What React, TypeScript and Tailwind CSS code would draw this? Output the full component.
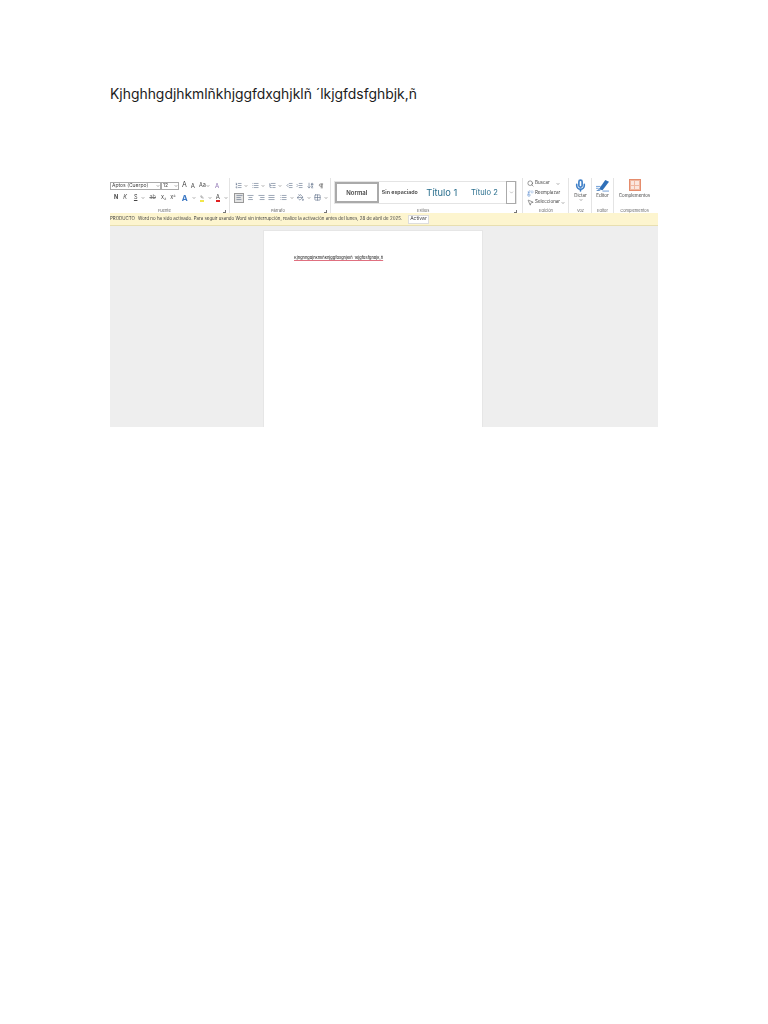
import {
  AlignCenter,
  AlignJustify,
  AlignLeft,
  AlignRight,
  ArrowDownAZ,
  ChevronDown,
  Grid2x2,
  Indent,
  List,
  ListOrdered,
  ListTree,
  Mic,
  MousePointer2,
  Outdent,
  PaintBucket,
  Pilcrow,
  Replace,
  Search,
} from "lucide-react";

const icon = "w-[7px] h-[7px] text-[#5a6a85]";

function Caret() {
  return <ChevronDown className="w-[4px] h-[4px] text-[#555]" strokeWidth={3} />;
}

function GroupLabel({ children }: { children: string }) {
  return <div className="text-[4px] leading-[5px] text-[#666] text-center">{children}</div>;
}

export default function App() {
  return (
    <div className="min-h-[1024px] bg-white pt-[85px] font-['Inter',sans-serif]">
      <p className="ml-[110px] text-[13.9px] leading-[18px] text-[#1c1c1c]">
        Kjhghhgdjhkmlñkhjggfdxghjklñ ´lkjgfdsfghbjk,ñ
      </p>

      {/* pasted screenshot of the word ribbon */}
      <div className="mt-[75px] ml-[110px] w-[548px] blur-[0.35px]">
        <div className="h-[35px] flex bg-white">
          {/* Fuente */}
          <div className="w-[120px] flex flex-col pt-[3px] border-r border-[#e4e4e4]">
            <div className="flex items-center h-[9px]">
              <div className="w-[51px] h-[8px] border border-[#aaa] flex items-center justify-between pl-[1px] text-[5px] text-[#444]">
                Aptos (Cuerpo)
                <Caret />
              </div>
              <div className="w-[18px] h-[8px] border border-[#aaa] flex items-center justify-between pl-[1px] text-[5px] text-[#444]">
                12
                <Caret />
              </div>
              <span className="text-[7px] text-[#444] ml-[3px]">A</span>
              <span className="text-[6px] text-[#444] ml-[4px]">A</span>
              <span className="text-[5.5px] text-[#444] ml-[4px]">Aa</span>
              <Caret />
              <span className="text-[6px] text-[#8a6fb0] ml-[5px]">A</span>
            </div>
            <div className="flex items-center gap-[4px] h-[11px] mt-[2px] pl-[4px] text-[5.5px] text-[#444]">
              <b>N</b>
              <i className="ml-[1px]">K</i>
              <span className="underline ml-[3px]">S</span>
              <Caret />
              <span className="line-through text-[#777]">ab</span>
              <span className="ml-[1px]">x₂</span>
              <span>x²</span>
              <span className="text-[8px] font-bold text-[#3b78c4] leading-none ml-[2px]">A</span>
              <Caret />
              <span className="border-b-2 border-[#f2e64a] text-[5px] leading-[6px] text-[#777]">✎</span>
              <Caret />
              <span className="border-b-2 border-[#e02020] text-[6px] leading-[6px]">A</span>
              <Caret />
            </div>
            <div className="mt-auto flex justify-between items-end pr-[3px] pl-[48px] pb-[0px]">
              <GroupLabel>Fuente</GroupLabel>
              <span className="w-[3px] h-[3px] border-r border-b border-[#777]" />
            </div>
          </div>

          {/* Parrafo */}
          <div className="ml-[3px] w-[98px] flex flex-col pt-[3px] border-r border-[#e4e4e4]">
            <div className="flex items-center gap-[2px] h-[9px] pl-[2px]">
              <ListOrdered className={icon} />
              <Caret />
              <List className={`${icon} ml-[2px]`} />
              <Caret />
              <ListTree className={`${icon} ml-[2px]`} />
              <Caret />
              <Outdent className={`${icon} ml-[2px]`} />
              <Indent className={`${icon} ml-[1px]`} />
              <ArrowDownAZ className={`${icon} ml-[2px]`} />
              <Pilcrow className="w-[6px] h-[6px] text-[#444] ml-[2px]" />
            </div>
            <div className="flex items-center gap-[3px] h-[11px] mt-[2px] pl-[1px]">
              <span className="w-[10px] h-[10px] bg-[#e4e4e4] border border-[#999] flex items-center justify-center">
                <AlignLeft className={icon} />
              </span>
              <AlignCenter className={icon} />
              <AlignRight className={`${icon} ml-[1px]`} />
              <AlignJustify className={icon} />
              <List className={`${icon} ml-[2px]`} />
              <Caret />
              <PaintBucket className={icon} />
              <Caret />
              <Grid2x2 className={icon} />
              <Caret />
            </div>
            <div className="mt-auto flex justify-between items-end pr-[3px] pl-[38px]">
              <GroupLabel>Párrafo</GroupLabel>
              <span className="w-[3px] h-[3px] border-r border-b border-[#777]" />
            </div>
          </div>

          {/* Estilos */}
          <div className="ml-[3px] w-[189px] flex flex-col pt-[3px] pr-[5px] border-r border-[#e4e4e4]">
            <div className="h-[23px] flex items-center border border-[#e4e4e4]">
              <div className="w-[44px] h-[21px] border-2 border-[#aaa] text-[6px] font-semibold text-[#444] flex items-center justify-center">
                Normal
              </div>
              <div className="w-[43px] text-[5.3px] font-semibold text-[#444] text-center whitespace-nowrap">
                Sin espaciado
              </div>
              <div className="w-[42px] text-[9.3px] text-[#2a6f8e] text-center whitespace-nowrap">Título 1</div>
              <div className="w-[44px] text-[7.6px] text-[#2a6f8e] text-center whitespace-nowrap">Título 2</div>
              <div className="ml-auto w-[10px] h-[23px] border border-[#aaa] flex items-center justify-center">
                <ChevronDown className="w-[5px] h-[5px] text-[#777]" />
              </div>
            </div>
            <div className="mt-auto flex justify-between items-end pl-[83px]">
              <GroupLabel>Estilos</GroupLabel>
              <span className="w-[3px] h-[3px] border-r border-b border-[#777]" />
            </div>
          </div>

          {/* Edicion */}
          <div className="ml-[1px] w-[45px] flex flex-col pt-[1px] pl-[3px] border-r border-[#e4e4e4] text-[4.5px] text-[#444]">
            <div className="flex items-center gap-[1px] h-[9px]">
              <Search className="w-[7px] h-[7px] text-[#555]" />
              Buscar
              <span className="ml-[5px]">
                <Caret />
              </span>
            </div>
            <div className="flex items-center gap-[1px] h-[10px]">
              <Replace className="w-[7px] h-[7px] text-[#5b8ed0]" />
              Reemplazar
            </div>
            <div className="flex items-center gap-[1px] h-[9px]">
              <MousePointer2 className="w-[7px] h-[7px] text-[#555]" />
              Seleccionar
              <Caret />
            </div>
            <div className="mt-auto pr-[3px]">
              <GroupLabel>Edición</GroupLabel>
            </div>
          </div>

          {/* Voz */}
          <div className="ml-[1px] w-[22px] flex flex-col items-center pt-[1px] border-r border-[#e4e4e4] text-[4.5px] text-[#444]">
            <Mic className="w-[13px] h-[13px] text-[#3f80c8]" strokeWidth={3} />
            <span className="mt-[1px] leading-[5px]">Dictar</span>
            <Caret />
            <div className="mt-auto">
              <GroupLabel>Voz</GroupLabel>
            </div>
          </div>

          {/* Editor */}
          <div className="w-[22px] flex flex-col items-center pt-[1px] border-r border-[#e4e4e4] text-[4.5px] text-[#444]">
            <svg viewBox="0 0 16 14" className="w-[15px] h-[13px]">
              <path d="M4 11 L11 1 L15 3 L8 12 Z" fill="#2f6fb8" />
              <path d="M1 13 L4 11 L6 12.5 Z" fill="#2f6fb8" />
              <path d="M1 8 H6 M1 10 H4 M8 13 H15" stroke="#6a9ad6" strokeWidth="1" />
            </svg>
            <span className="mt-[1px] leading-[5px]">Editor</span>
            <div className="mt-auto">
              <GroupLabel>Editor</GroupLabel>
            </div>
          </div>

          {/* Complementos */}
          <div className="w-[41px] flex flex-col items-center pt-[1px] text-[4.4px] text-[#444]">
            <div className="w-[12px] h-[12px] bg-[#f0b7a0] border border-[#e58c6c] grid grid-cols-2 gap-[1px] p-[1px]">
              <span className="bg-[#fbe6dd]" />
              <span className="bg-[#fbe6dd]" />
              <span className="bg-[#fbe6dd]" />
              <span className="bg-[#fbe6dd]" />
            </div>
            <span className="mt-[2px] leading-[5px]">Complementos</span>
            <div className="mt-auto">
              <GroupLabel>Complementos</GroupLabel>
            </div>
          </div>
        </div>

        {/* activation bar */}
        <div className="h-[13px] bg-[#fdf5cf] border-b border-[#e8dfb0] flex items-center text-[4.45px] text-[#444] whitespace-nowrap">
          <span className="w-[28px]">PRODUCTO</span>
          Word no ha sido activado. Para seguir usando Word sin interrupción, realice la activación antes del lunes, 28 de abril de 2025.
          <span className="ml-[6px] h-[9px] w-[21px] bg-white border border-[#ddd] flex items-center justify-center text-[5px]">Activar</span>
        </div>

        {/* document area */}
        <div className="h-[201px] bg-[#eeeeee] pt-[4px] pl-[153px] overflow-hidden">
          <div className="w-[220px] h-[197px] bg-white border-x border-t border-[#e6e6e6] pt-[24px] pl-[30px]">
            <p className="text-[3.9px] leading-[5px] font-semibold text-[#555] underline decoration-[#e07080] whitespace-nowrap">
              Kjhghhgdjhkmlñkhjggfdxghjklñ ´lkjgfdsfghbjk,ñ
            </p>
          </div>
        </div>
      </div>
    </div>
  );
}
